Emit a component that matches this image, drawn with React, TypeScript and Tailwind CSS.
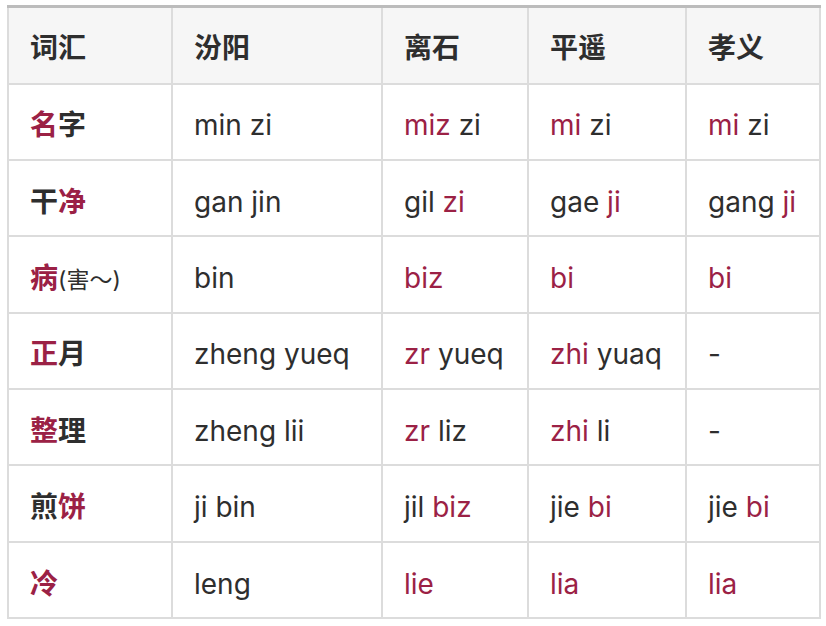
const R = ({ children }: { children: React.ReactNode }) => <span className="text-[#9b2145]">{children}</span>;

type Row = { word: React.ReactNode; cells: React.ReactNode[] };

const headers = ["词汇", "汾阳", "离石", "平遥", "孝义"];

const rows: Row[] = [
  {
    word: (
      <>
        <R>名</R>字
      </>
    ),
    cells: [
      "min zi",
      <><R>miz</R> zi</>,
      <><R>mi</R> zi</>,
      <><R>mi</R> zi</>,
    ],
  },
  {
    word: (
      <>
        干<R>净</R>
      </>
    ),
    cells: [
      "gan jin",
      <>gil <R>zi</R></>,
      <>gae <R>ji</R></>,
      <>gang <R>ji</R></>,
    ],
  },
  {
    word: (
      <>
        <R>病</R>
        <span className="text-[23px] font-normal">(害～)</span>
      </>
    ),
    cells: ["bin", <R>biz</R>, <R>bi</R>, <R>bi</R>],
  },
  {
    word: (
      <>
        <R>正</R>月
      </>
    ),
    cells: ["zheng yueq", <><R>zr</R> yueq</>, <><R>zhi</R> yuaq</>, "-"],
  },
  {
    word: (
      <>
        <R>整</R>理
      </>
    ),
    cells: ["zheng lii", <><R>zr</R> liz</>, <><R>zhi</R> li</>, "-"],
  },
  {
    word: (
      <>
        煎<R>饼</R>
      </>
    ),
    cells: ["ji bin", <>jil <R>biz</R></>, <>jie <R>bi</R></>, <>jie <R>bi</R></>],
  },
  {
    word: <R>冷</R>,
    cells: ["leng", <R>lie</R>, <R>lia</R>, <R>lia</R>],
  },
];

const widths = ["w-[164px]", "w-[210px]", "w-[146px]", "w-[158px]", "w-[134px]"];

export default function App() {
  return (
    <div
      className="min-h-screen bg-white pl-[7px] pt-[5px] text-[28px] text-[#2e2e2e]"
      style={{ fontFamily: 'Inter, "Noto Sans CJK SC", sans-serif' }}
    >
      <table className="table-fixed border-collapse border-t-[3px] border-t-[#bcbcbc]">
        <thead>
          <tr className="bg-[#f6f6f6]">
            {headers.map((h, i) => (
              <th
                key={h}
                className={`${widths[i]} h-[77px] whitespace-nowrap border-2 border-t-0 border-[#dcdcdc] pl-[21px] pr-[10px] pt-[5px] text-left font-bold`}
              >
                {h}
              </th>
            ))}
          </tr>
        </thead>
        <tbody>
          {rows.map((row, r) => (
            <tr key={r}>
              <td className="h-[76.4px] whitespace-nowrap border-2 border-[#dcdcdc] pl-[21px] pr-[10px] pt-[7px] font-bold">
                {row.word}
              </td>
              {row.cells.map((c, i) => (
                <td key={i} className="h-[76.4px] whitespace-nowrap border-2 border-[#dcdcdc] pl-[21px] pr-[10px] pt-[7px]">
                  {c}
                </td>
              ))}
            </tr>
          ))}
        </tbody>
      </table>
    </div>
  );
}
